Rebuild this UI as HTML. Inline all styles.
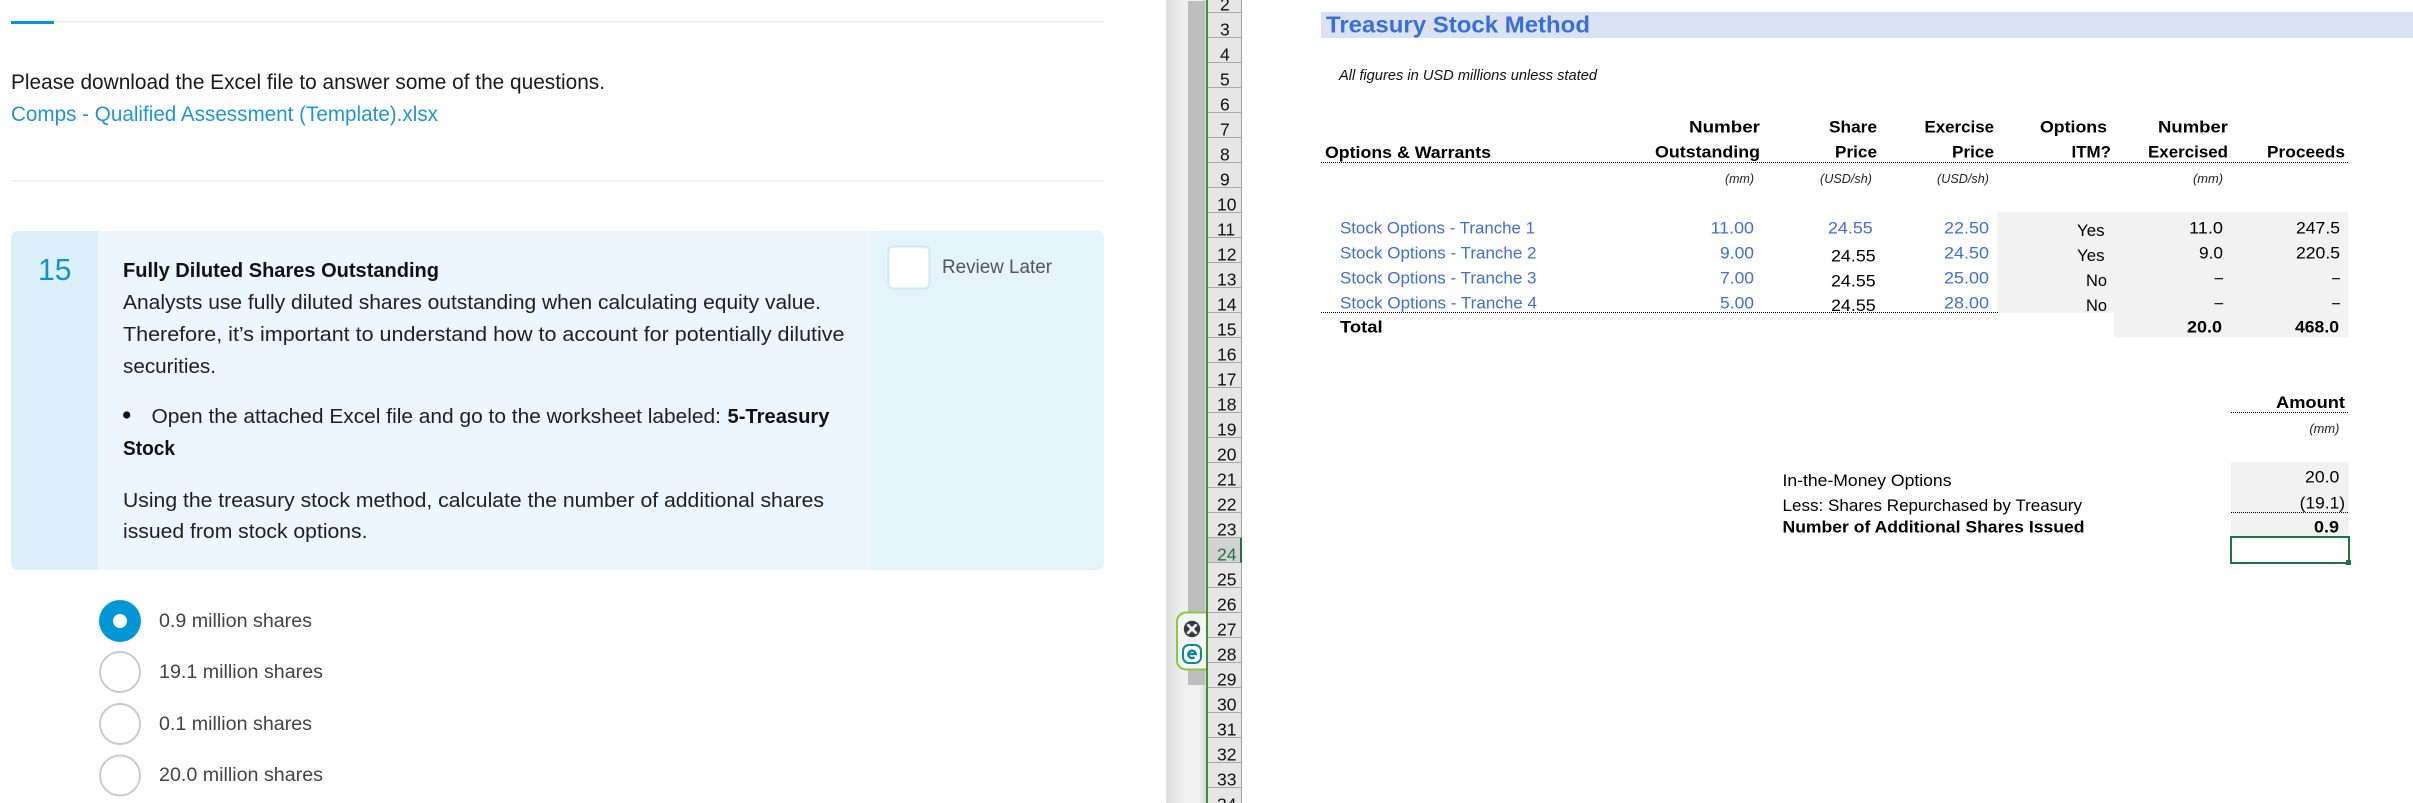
<!DOCTYPE html>
<html><head><meta charset="utf-8"><style>
html,body{margin:0;padding:0;background:#fff;width:2413px;height:803px;overflow:hidden}
svg{display:block}
text{font-family:"Liberation Sans",Arial,sans-serif;white-space:pre}
.b{font-size:20.5px;fill:#1f1f1f}
.h{font-size:16.5px;font-weight:bold;fill:#000}
.t{font-size:16.5px;fill:#000}
.v{font-size:16.5px;fill:#3f6fd8}
.u{font-size:12.5px;font-style:italic;fill:#222}
.r{font-size:17.5px;fill:#111}
.o{font-size:19px;fill:#444}
</style></head><body>
<svg xmlns="http://www.w3.org/2000/svg" width="2413" height="803" viewBox="0 0 2413 803">
<defs><linearGradient id="sb" x1="0" x2="1" y1="0" y2="0"><stop offset="0" stop-color="#dcdcdc"/><stop offset=".4" stop-color="#efefef"/><stop offset=".85" stop-color="#f0f0f0"/><stop offset="1" stop-color="#d8d8d8"/></linearGradient>
<clipPath id="card"><rect x="11" y="231" width="1093" height="339" rx="7"/></clipPath></defs>
<rect width="2413" height="803" fill="#fff"/>

<!-- left top -->
<rect x="11" y="21" width="1093" height="1.5" fill="#eeeeee"/>
<rect x="11" y="21" width="43" height="3" fill="#0096d6"/>
<text x="11" y="89" style="font-size:21.5px;fill:#1a1a1a" textLength="594" lengthAdjust="spacingAndGlyphs">Please download the Excel file to answer some of the questions.</text>
<text x="11" y="121" style="font-size:21.5px;fill:#1f95d6" textLength="427" lengthAdjust="spacingAndGlyphs">Comps - Qualified Assessment (Template).xlsx</text>
<rect x="11" y="180" width="1093" height="1.5" fill="#eeeeee"/>

<!-- card -->
<g clip-path="url(#card)">
<rect x="11" y="231" width="1093" height="339" fill="#edf6fc"/>
<rect x="11" y="231" width="87" height="339" fill="#dcf0f9"/>
<rect x="871" y="231" width="233" height="339" fill="#e5f4fb"/>
</g>
<text x="38" y="280" style="font-size:31px;fill:#1193d3" textLength="33.5" lengthAdjust="spacingAndGlyphs">15</text>
<text x="123" y="277" style="font-size:20.5px;font-weight:bold;fill:#111" textLength="316" lengthAdjust="spacingAndGlyphs">Fully Diluted Shares Outstanding</text>
<text x="123" y="309" class="b" textLength="698" lengthAdjust="spacingAndGlyphs">Analysts use fully diluted shares outstanding when calculating equity value.</text>
<text x="123" y="341" class="b" textLength="721.5" lengthAdjust="spacingAndGlyphs">Therefore, it’s important to understand how to account for potentially dilutive</text>
<text x="123" y="373" class="b" textLength="93" lengthAdjust="spacingAndGlyphs">securities.</text>
<circle cx="126.7" cy="415" r="3.6" fill="#111"/>
<text x="151.5" y="423" class="b" textLength="569.5" lengthAdjust="spacingAndGlyphs">Open the attached Excel file and go to the worksheet labeled:</text>
<text x="727.5" y="423" style="font-size:20.5px;font-weight:bold;fill:#111" textLength="102" lengthAdjust="spacingAndGlyphs">5-Treasury</text>
<text x="123" y="455" style="font-size:20.5px;font-weight:bold;fill:#111" textLength="52" lengthAdjust="spacingAndGlyphs">Stock</text>
<text x="123" y="507" class="b" textLength="701" lengthAdjust="spacingAndGlyphs">Using the treasury stock method, calculate the number of additional shares</text>
<text x="123" y="538" class="b" textLength="244.5" lengthAdjust="spacingAndGlyphs">issued from stock options.</text>
<rect x="888.5" y="246.5" width="41" height="42" rx="5" fill="#fff" stroke="#cfe9f6" stroke-width="2"/>
<text x="942" y="273" style="font-size:19px;fill:#555" textLength="110" lengthAdjust="spacingAndGlyphs">Review Later</text>

<!-- radios -->
<circle cx="120" cy="621" r="21" fill="#0096d6"/><circle cx="120" cy="621" r="7" fill="#fff"/>
<circle cx="120" cy="672" r="20" fill="#fff" stroke="#cccccc" stroke-width="2"/>
<circle cx="120" cy="724" r="20" fill="#fff" stroke="#cccccc" stroke-width="2"/>
<circle cx="120" cy="775.5" r="20" fill="#fff" stroke="#cccccc" stroke-width="2"/>
<text x="159" y="627" class="o" textLength="153" lengthAdjust="spacingAndGlyphs">0.9 million shares</text>
<text x="159" y="678" class="o" textLength="164" lengthAdjust="spacingAndGlyphs">19.1 million shares</text>
<text x="159" y="730" class="o" textLength="153" lengthAdjust="spacingAndGlyphs">0.1 million shares</text>
<text x="159" y="781" class="o" textLength="164" lengthAdjust="spacingAndGlyphs">20.0 million shares</text>

<!-- scrollbar -->
<rect x="1166" y="0" width="40" height="803" fill="url(#sb)"/>
<rect x="1188" y="1" width="17" height="684" fill="#bdbdbd"/>
<rect x="1206" y="0" width="2" height="803" fill="#4a8a3a"/>
<rect x="1208" y="0" width="33" height="803" fill="#e6e6e6"/>
<rect x="1241" y="0" width="1" height="803" fill="#a3a3a3"/>
<rect x="1208" y="538" width="33" height="24" fill="#d2d2d2"/>
<rect x="1240" y="538" width="2" height="25" fill="#217346"/>

<!-- row separators -->
<g fill="#a8a8a8">
<rect x="1208" y="12" width="33" height="1"/><rect x="1208" y="37" width="33" height="1"/><rect x="1208" y="62" width="33" height="1"/><rect x="1208" y="87" width="33" height="1"/><rect x="1208" y="112" width="33" height="1"/><rect x="1208" y="137" width="33" height="1"/><rect x="1208" y="162" width="33" height="1"/><rect x="1208" y="187" width="33" height="1"/><rect x="1208" y="212" width="33" height="1"/><rect x="1208" y="237" width="33" height="1"/><rect x="1208" y="262" width="33" height="1"/><rect x="1208" y="287" width="33" height="1"/><rect x="1208" y="312" width="33" height="1"/><rect x="1208" y="337" width="33" height="1"/><rect x="1208" y="362" width="33" height="1"/><rect x="1208" y="387" width="33" height="1"/><rect x="1208" y="412" width="33" height="1"/><rect x="1208" y="437" width="33" height="1"/><rect x="1208" y="462" width="33" height="1"/><rect x="1208" y="487" width="33" height="1"/><rect x="1208" y="512" width="33" height="1"/><rect x="1208" y="537" width="33" height="1"/><rect x="1208" y="562" width="33" height="1"/><rect x="1208" y="587" width="33" height="1"/><rect x="1208" y="612" width="33" height="1"/><rect x="1208" y="637" width="33" height="1"/><rect x="1208" y="662" width="33" height="1"/><rect x="1208" y="687" width="33" height="1"/><rect x="1208" y="712" width="33" height="1"/><rect x="1208" y="737" width="33" height="1"/><rect x="1208" y="762" width="33" height="1"/><rect x="1208" y="787" width="33" height="1"/>
</g>
<!-- row numbers -->
<g class="r">
<text class="r" x="1220" y="10.7">2</text><text class="r" x="1220" y="35.7">3</text><text class="r" x="1220" y="60.7">4</text><text class="r" x="1220" y="85.7">5</text><text class="r" x="1220" y="110.7">6</text><text class="r" x="1220" y="135.7">7</text><text class="r" x="1220" y="160.7">8</text><text class="r" x="1220" y="185.7">9</text>
<text class="r" x="1217" y="210.7">10</text><text class="r" x="1217" y="235.7">11</text><text class="r" x="1217" y="260.7">12</text><text class="r" x="1217" y="285.7">13</text><text class="r" x="1217" y="310.7">14</text><text class="r" x="1217" y="335.7">15</text><text class="r" x="1217" y="360.7">16</text><text class="r" x="1217" y="385.7">17</text><text class="r" x="1217" y="410.7">18</text><text class="r" x="1217" y="435.7">19</text><text class="r" x="1217" y="460.7">20</text><text class="r" x="1217" y="485.7">21</text><text class="r" x="1217" y="510.7">22</text><text class="r" x="1217" y="535.7">23</text>
<text x="1217" y="560.7" style="font-size:17.5px;fill:#217346">24</text>
<text class="r" x="1217" y="585.7">25</text><text class="r" x="1217" y="610.7">26</text><text class="r" x="1217" y="635.7">27</text><text class="r" x="1217" y="660.7">28</text><text class="r" x="1217" y="685.7">29</text><text class="r" x="1217" y="710.7">30</text><text class="r" x="1217" y="735.7">31</text><text class="r" x="1217" y="760.7">32</text><text class="r" x="1217" y="785.7">33</text><text class="r" x="1217" y="810.7">34</text>
</g>

<!-- extension popup -->
<path d="M1206 612.5H1186a9 9 0 0 0-9 9V660a9 9 0 0 0 9 9.5H1206" fill="#f4f4f4" stroke="#8dc63f" stroke-width="2"/>
<circle cx="1192" cy="629" r="8.2" fill="#333a40"/>
<path d="M1188.3 625.3L1195.7 632.7M1195.7 625.3L1188.3 632.7" stroke="#f4f4f4" stroke-width="2.8" stroke-linecap="round"/>
<rect x="1183" y="645" width="18" height="18" rx="6" fill="#fff" stroke="#0e8a94" stroke-width="2"/>
<path d="M1188.5 654h7.2a3.7 3.7 0 1 0-1.2 3.1" fill="none" stroke="#0e8a94" stroke-width="2.4"/>

<!-- sheet -->
<rect x="1321" y="12" width="1092" height="26" fill="#d9e2f3"/>
<text x="1326" y="32.7" style="font-size:23px;font-weight:bold;fill:#3a6fd8" textLength="264" lengthAdjust="spacingAndGlyphs">Treasury Stock Method</text>
<text x="1339" y="80" style="font-size:14.5px;font-style:italic;fill:#111" textLength="258" lengthAdjust="spacingAndGlyphs">All figures in USD millions unless stated</text>

<rect x="1997.5" y="212" width="351" height="100.5" fill="#f2f2f2"/>
<rect x="2114" y="312" width="234.5" height="25.5" fill="#f2f2f2"/>
<rect x="2231" y="462" width="118" height="74" fill="#f2f2f2"/>

<text x="1325" y="158" class="h" textLength="166" lengthAdjust="spacingAndGlyphs">Options &amp; Warrants</text>
<text x="1689" y="132.7" class="h" textLength="71" lengthAdjust="spacingAndGlyphs">Number</text>
<text x="1655" y="157.7" class="h" textLength="105" lengthAdjust="spacingAndGlyphs">Outstanding</text>
<text x="1829" y="132.7" class="h" textLength="48" lengthAdjust="spacingAndGlyphs">Share</text>
<text x="1835" y="157.7" class="h" textLength="42" lengthAdjust="spacingAndGlyphs">Price</text>
<text x="1924.5" y="132.7" class="h" textLength="69.5" lengthAdjust="spacingAndGlyphs">Exercise</text>
<text x="1952" y="157.7" class="h" textLength="42" lengthAdjust="spacingAndGlyphs">Price</text>
<text x="2040" y="132.7" class="h" textLength="67" lengthAdjust="spacingAndGlyphs">Options</text>
<text x="2071.5" y="157.7" class="h" textLength="39.5" lengthAdjust="spacingAndGlyphs">ITM?</text>
<text x="2158" y="132.7" class="h" textLength="70" lengthAdjust="spacingAndGlyphs">Number</text>
<text x="2148" y="157.7" class="h" textLength="80" lengthAdjust="spacingAndGlyphs">Exercised</text>
<text x="2267" y="157.7" class="h" textLength="78" lengthAdjust="spacingAndGlyphs">Proceeds</text>
<line x1="1321" x2="2348" y1="162.5" y2="162.5" stroke="#000" stroke-width="1" stroke-dasharray="1 1"/>

<text x="1725" y="183" class="u" textLength="29" lengthAdjust="spacingAndGlyphs">(mm)</text>
<text x="1820" y="183" class="u" textLength="52" lengthAdjust="spacingAndGlyphs">(USD/sh)</text>
<text x="1937" y="183" class="u" textLength="52" lengthAdjust="spacingAndGlyphs">(USD/sh)</text>
<text x="2193" y="183" class="u" textLength="30" lengthAdjust="spacingAndGlyphs">(mm)</text>

<text x="1340" y="233.3" class="v" textLength="195" lengthAdjust="spacingAndGlyphs">Stock Options - Tranche 1</text>
<text x="1340" y="258.3" class="v" textLength="196.5" lengthAdjust="spacingAndGlyphs">Stock Options - Tranche 2</text>
<text x="1340" y="283.3" class="v" textLength="196.5" lengthAdjust="spacingAndGlyphs">Stock Options - Tranche 3</text>
<text x="1340" y="308.3" class="v" textLength="197" lengthAdjust="spacingAndGlyphs">Stock Options - Tranche 4</text>
<text x="1340" y="332.7" class="h" textLength="42.7" lengthAdjust="spacingAndGlyphs">Total</text>

<text x="1710.5" y="233.3" class="v" textLength="43.5" lengthAdjust="spacingAndGlyphs">11.00</text>
<text x="1720" y="258.3" class="v" textLength="34" lengthAdjust="spacingAndGlyphs">9.00</text>
<text x="1720" y="283.3" class="v" textLength="34" lengthAdjust="spacingAndGlyphs">7.00</text>
<text x="1720" y="308.3" class="v" textLength="34" lengthAdjust="spacingAndGlyphs">5.00</text>

<text x="1828" y="233.3" class="v" textLength="44.7" lengthAdjust="spacingAndGlyphs">24.55</text>
<text x="1831" y="261.3" class="t" textLength="44.7" lengthAdjust="spacingAndGlyphs">24.55</text>
<text x="1831" y="286.3" class="t" textLength="44.7" lengthAdjust="spacingAndGlyphs">24.55</text>
<text x="1831" y="311" class="t" textLength="44.7" lengthAdjust="spacingAndGlyphs">24.55</text>

<text x="1944" y="233.3" class="v" textLength="45" lengthAdjust="spacingAndGlyphs">22.50</text>
<text x="1944" y="258.3" class="v" textLength="45" lengthAdjust="spacingAndGlyphs">24.50</text>
<text x="1944" y="283.3" class="v" textLength="45" lengthAdjust="spacingAndGlyphs">25.00</text>
<text x="1944" y="308.3" class="v" textLength="45" lengthAdjust="spacingAndGlyphs">28.00</text>

<text x="2077" y="236" class="t" textLength="27.5" lengthAdjust="spacingAndGlyphs">Yes</text>
<text x="2077" y="261" class="t" textLength="27.5" lengthAdjust="spacingAndGlyphs">Yes</text>
<text x="2086" y="286" class="t" textLength="21" lengthAdjust="spacingAndGlyphs">No</text>
<text x="2086" y="311" class="t" textLength="21" lengthAdjust="spacingAndGlyphs">No</text>

<text x="2189" y="233.3" class="t" textLength="34" lengthAdjust="spacingAndGlyphs">11.0</text>
<text x="2199" y="258.3" class="t" textLength="24" lengthAdjust="spacingAndGlyphs">9.0</text>
<rect x="2214.5" y="278" width="8.5" height="1.3" fill="#222"/>
<rect x="2214.5" y="303" width="8.5" height="1.3" fill="#222"/>
<text x="2296" y="233.3" class="t" textLength="44" lengthAdjust="spacingAndGlyphs">247.5</text>
<text x="2296" y="258.3" class="t" textLength="44" lengthAdjust="spacingAndGlyphs">220.5</text>
<rect x="2332" y="278" width="8" height="1.3" fill="#222"/>
<rect x="2332" y="303" width="8" height="1.3" fill="#222"/>
<text x="2187" y="332.7" class="h" textLength="35" lengthAdjust="spacingAndGlyphs">20.0</text>
<text x="2295" y="332.7" class="h" textLength="44" lengthAdjust="spacingAndGlyphs">468.0</text>

<line x1="1321" x2="1998" y1="312.5" y2="312.5" stroke="#000" stroke-width="1" stroke-dasharray="1 1"/>

<text x="2276" y="408" class="h" textLength="69" lengthAdjust="spacingAndGlyphs">Amount</text>
<line x1="2231" x2="2348" y1="412.5" y2="412.5" stroke="#000" stroke-width="1" stroke-dasharray="1 1"/>
<text x="2309.4" y="433" class="u" textLength="30" lengthAdjust="spacingAndGlyphs">(mm)</text>

<text x="1782.5" y="486" class="t" textLength="169" lengthAdjust="spacingAndGlyphs">In-the-Money Options</text>
<text x="1782.5" y="511" class="t" textLength="299.5" lengthAdjust="spacingAndGlyphs">Less: Shares Repurchased by Treasury</text>
<text x="1782.5" y="532.7" class="h" textLength="302" lengthAdjust="spacingAndGlyphs">Number of Additional Shares Issued</text>
<text x="2305" y="482.7" class="t" textLength="34.4" lengthAdjust="spacingAndGlyphs">20.0</text>
<text x="2299.7" y="508.5" class="t" textLength="45.3" lengthAdjust="spacingAndGlyphs">(19.1)</text>
<line x1="2231" x2="2348" y1="512.5" y2="512.5" stroke="#000" stroke-width="1" stroke-dasharray="1 1"/>
<text x="2314" y="532.7" class="h" textLength="25" lengthAdjust="spacingAndGlyphs">0.9</text>

<rect x="2231" y="537" width="118" height="26" fill="#fff" stroke="#217346" stroke-width="2"/>
<rect x="2346" y="560" width="5" height="5" fill="#217346"/>
</svg>
</body></html>
